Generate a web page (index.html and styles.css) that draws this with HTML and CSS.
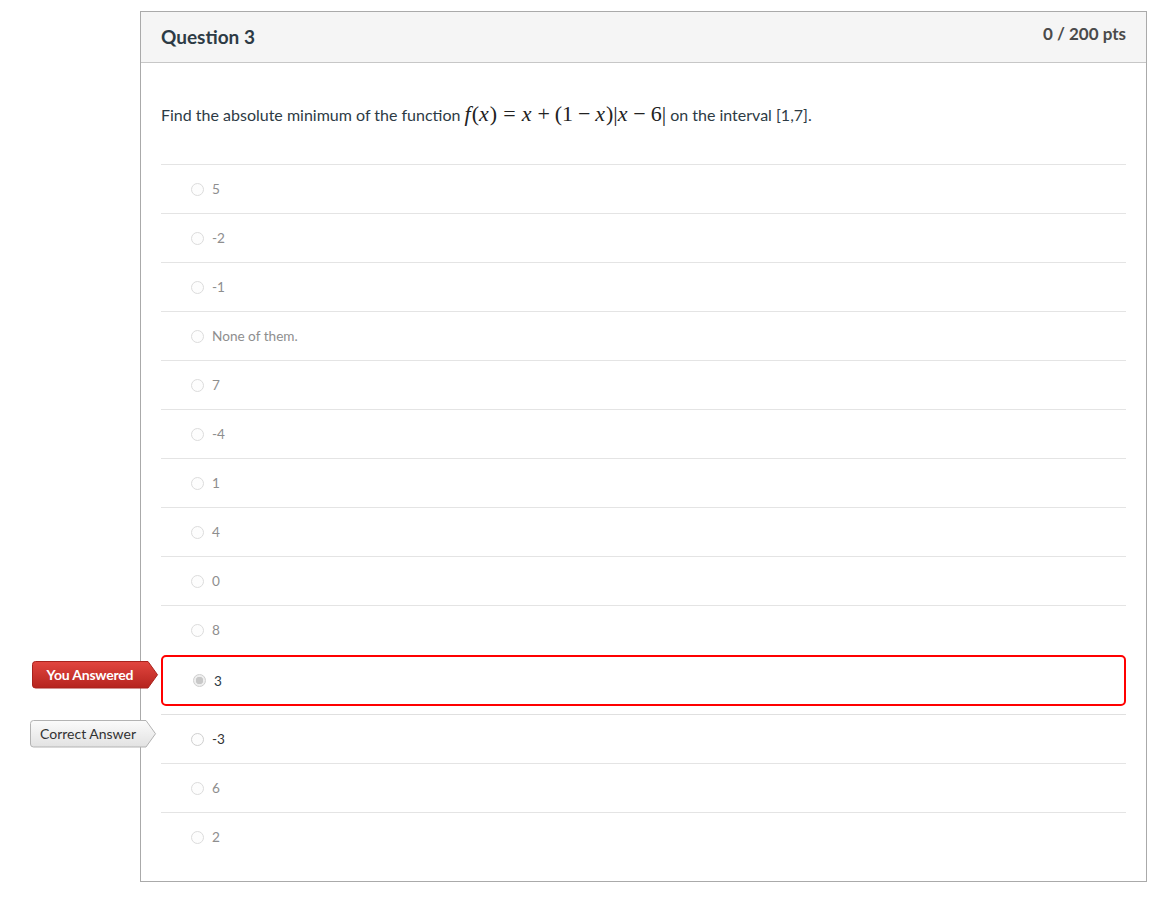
FILE: index.html
```html
<!DOCTYPE html>
<html>
<head>
<meta charset="utf-8">
<link rel="stylesheet" href="styles.css">
</head>
<body>
<div class="card">
  <div class="card-header">
    <h2 class="q-title">Question 3</h2>
    <div class="q-pts">0 / 200 pts</div>
  </div>
  <div class="card-body">
    <p class="q-text">Find the absolute minimum of the function <span class="math"><i>f</i>(<i>x</i>)<span class="rel">=</span><i>x</i><span class="bin">+</span>(1<span class="bin">−</span><i>x</i>)|<i>x</i><span class="bin">−</span>6|</span> on the interval [1,7].</p>
    <div class="answers">
      <div class="answer"><span class="radio"></span><span class="label">5</span></div>
      <div class="answer"><span class="radio"></span><span class="label">-2</span></div>
      <div class="answer"><span class="radio"></span><span class="label">-1</span></div>
      <div class="answer"><span class="radio"></span><span class="label">None of them.</span></div>
      <div class="answer"><span class="radio"></span><span class="label">7</span></div>
      <div class="answer"><span class="radio"></span><span class="label">-4</span></div>
      <div class="answer"><span class="radio"></span><span class="label">1</span></div>
      <div class="answer"><span class="radio"></span><span class="label">4</span></div>
      <div class="answer"><span class="radio"></span><span class="label">0</span></div>
      <div class="answer"><span class="radio"></span><span class="label">8</span></div>
      <div class="answer selected">
        <div class="badge badge-wrong">
          <svg class="badge-shape" width="127" height="28" viewBox="0 0 127 28">
            <defs>
              <linearGradient id="gRed" x1="0" y1="0" x2="0" y2="1">
                <stop offset="0" stop-color="#e2463f"/>
                <stop offset="1" stop-color="#b5241e"/>
              </linearGradient>
            </defs>
            <path d="M3.5,0.5 H116 L125.5,13.75 L116,27 H3.5 Q0.5,27 0.5,24 V3.5 Q0.5,0.5 3.5,0.5 Z" fill="url(#gRed)" stroke="#a8231d" stroke-width="1"/>
          </svg>
          <span class="badge-text">You Answered</span>
        </div>
        <span class="radio checked"></span><span class="label">3</span>
      </div>
      <div class="answer correct">
        <div class="badge badge-correct">
          <svg class="badge-shape" width="127" height="28" viewBox="0 0 127 28">
            <defs>
              <linearGradient id="gGrey" x1="0" y1="0" x2="0" y2="1">
                <stop offset="0" stop-color="#fbfbfb"/>
                <stop offset="1" stop-color="#e2e2e2"/>
              </linearGradient>
            </defs>
            <path d="M3.5,0.5 H116 L125.5,13.75 L116,27 H3.5 Q0.5,27 0.5,24 V3.5 Q0.5,0.5 3.5,0.5 Z" fill="url(#gGrey)" stroke="#b3b3b3" stroke-width="1"/>
          </svg>
          <span class="badge-text">Correct Answer</span>
        </div>
        <span class="radio"></span><span class="label">-3</span>
      </div>
      <div class="answer"><span class="radio"></span><span class="label">6</span></div>
      <div class="answer"><span class="radio"></span><span class="label">2</span></div>
    </div>
  </div>
</div>
</body>
</html>
```
FILE: styles.css
```css
html, body {
  margin: 0;
  padding: 0;
  background: #ffffff;
}
body {
  font-family: Lato, "Open Sans", "Liberation Sans", sans-serif;
  color: #2d3b45;
}
.card {
  margin: 11px 0 0 140px;
  width: 1005px;
  border: 1px solid #aaaaaa;
  box-sizing: content-box;
}
.card-header {
  height: 50px;
  background: #f5f5f5;
  border-bottom: 1px solid #c7c7c7;
  display: flex;
  justify-content: space-between;
  align-items: flex-start;
  padding: 0 20px 0 20px;
}
.q-title {
  margin: 0;
  padding-top: 13px;
  font-size: 19px;
  font-weight: 700;
  line-height: 24px;
  color: #2d3b45;
}
.q-pts {
  padding-top: 12px;
  font-size: 17px;
  font-weight: 700;
  line-height: 20px;
  color: #4a4a4a;
}
.card-body {
  padding: 0 20px 20px 20px;
}
.q-text {
  margin: 0;
  height: 22px;
  padding: 40px 0 39px 0;
  font-size: 16px;
  line-height: 22px;
  color: #2d3b45;
}
.math {
  font-family: "Liberation Serif", "DejaVu Serif", serif;
  font-size: 22px;
  line-height: 22px;
  color: #222;
  white-space: nowrap;
}
.math i {
  font-style: italic;
  padding-right: 1px;
}
.math .rel {
  margin: 0 0.278em;
}
.math .bin {
  margin: 0 0.222em;
}
.answers {
  display: flex;
  flex-direction: column;
}
.answer {
  position: relative;
  height: 48px;
  border-top: 1px solid #e4e4e4;
  display: flex;
  align-items: center;
  padding-left: 30px;
  font-size: 13.6px;
  color: #8e8e8e;
}
.answer .radio {
  width: 11px;
  height: 11px;
  border: 1px solid #dcdcdc;
  border-radius: 50%;
  background: #fdfdfd;
  margin-right: 8px;
  flex: none;
}
.answer.selected {
  height: 47px;
  border: 2px solid #ff0000;
  border-radius: 5px;
  margin-top: 1px;
  margin-bottom: 8px;
  color: #2d3b45;
  padding-left: 30px;
}
.answer.selected + .answer {
  border-top: 1px solid #e0e0e0;
}
.radio.checked {
  width: 11px;
  height: 11px;
  border: 1px solid #cfcfcf;
  background: radial-gradient(circle, #c8c8c8 0 3.5px, #eeeeee 4px);
  margin-right: 8px;
}
.answer.correct {
  color: #333333;
}
.answer.correct .radio {
  border-color: #cfcfcf;
}
.badge {
  position: absolute;
  width: 127px;
  height: 28px;
  display: flex;
  align-items: center;
}
.badge-wrong {
  left: -131px;
  top: 4px;
}
.badge-correct {
  left: -131px;
  top: 5px;
}
.badge-shape {
  position: absolute;
  left: 0;
  top: 0;
}
.badge-text {
  position: relative;
  width: 116px;
  text-align: center;
  font-size: 14px;
  line-height: 16px;
}
.badge-wrong .badge-text {
  color: #ffffff;
  font-weight: 700;
  letter-spacing: -0.2px;
}
.badge-correct .badge-text {
  color: #333333;
  font-weight: 400;
  font-size: 14px;
}
```
